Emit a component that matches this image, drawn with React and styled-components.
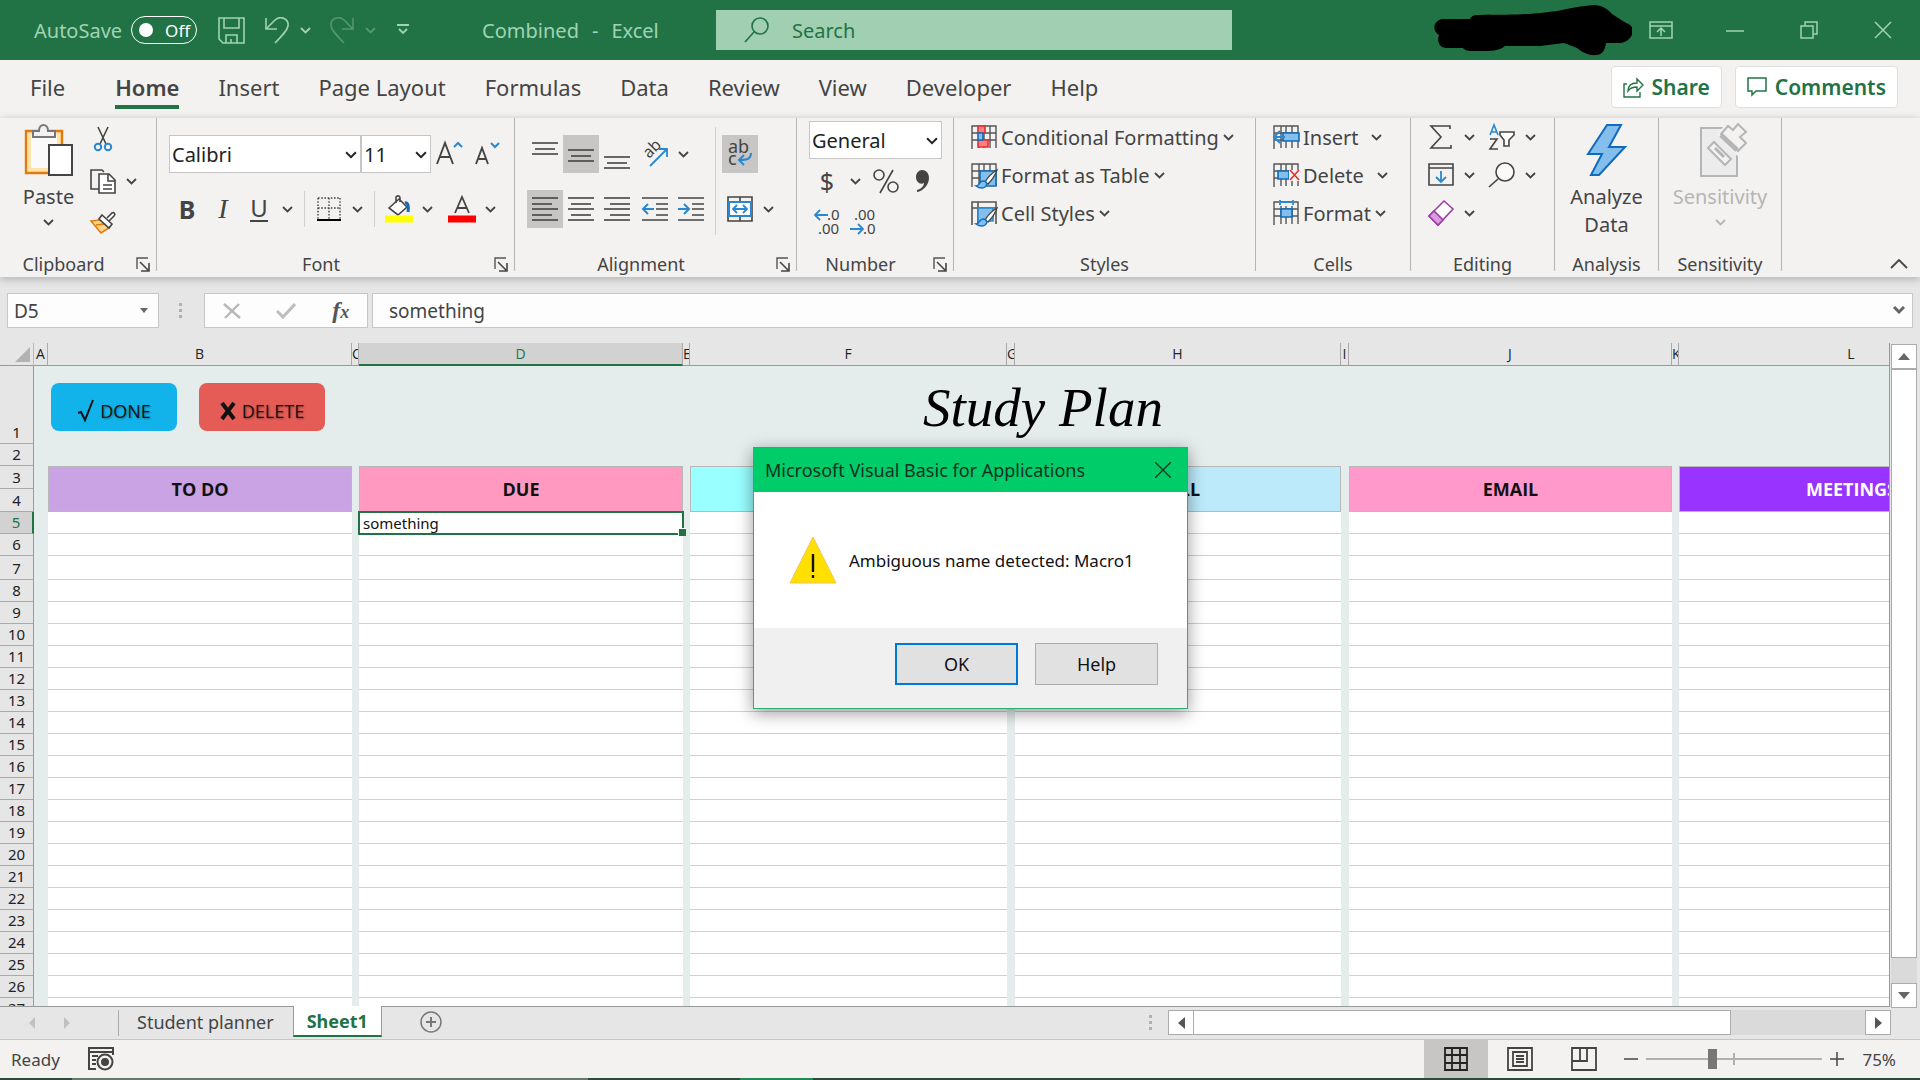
import { useState } from "react";
import styled, { createGlobalStyle } from "styled-components";

const columns = [
  { name: "A", width: 14 },
  { name: "B", width: 304, title: "TO DO", color: "#c9a3e4" },
  { name: "C", width: 7 },
  { name: "D", width: 324, title: "DUE", color: "#ff99c0" },
  { name: "E", width: 7 },
  { name: "F", width: 317, title: "TEST", color: "#99ffff" },
  { name: "G", width: 8 },
  { name: "H", width: 326, title: "CALL", color: "#bdeafa" },
  { name: "I", width: 8 },
  { name: "J", width: 323, title: "EMAIL", color: "#ff99cc" },
  { name: "K", width: 7 },
  { name: "L", width: 345, title: "MEETINGS", color: "#9933ff", text: "#fff" },
  { name: "M", width: 14 },
];

const rows = Array.from({ length: 23 }, (_, i) => i + 5);
const tabs = [
  "File",
  "Home",
  "Insert",
  "Page Layout",
  "Formulas",
  "Data",
  "Review",
  "View",
  "Developer",
  "Help",
];

function Chevron({ size = 11, color = "currentColor" }) {
  return (
    <svg width={size} height={size} viewBox="0 0 11 11" fill="none">
      <path d="M1 3l4.5 4.5L10 3" stroke={color} strokeWidth="1.8" />
    </svg>
  );
}

function Icon({ w = 26, h = 26, children }) {
  return (
    <svg
      width={w}
      height={h}
      viewBox={`0 0 ${w} ${h}`}
      fill="none"
      stroke="#444"
      strokeWidth="1.6"
      overflow="visible"
    >
      {children}
    </svg>
  );
}

function Split({ label, children }) {
  return (
    <Cluster>
      <ToolButton aria-label={label}>{children}</ToolButton>
      <ArrowButton aria-label={label + " options"}>
        <Chevron />
      </ArrowButton>
    </Cluster>
  );
}

function Lines({ rows: lines }) {
  return (
    <Icon>
      {lines.map(([x1, x2, y]) => (
        <path key={y} d={`M${x1} ${y}H${x2}`} />
      ))}
    </Icon>
  );
}

function Launcher({ label }) {
  return (
    <LauncherButton aria-label={label + " settings"}>
      <svg width="14" height="15" viewBox="0 0 14 15" fill="none">
        <path d="M1 12V1h11" stroke="#555" strokeWidth="1.4" />
        <path d="M4 5l8 8M13 6v8H5" stroke="#444" strokeWidth="1.6" />
      </svg>
    </LauncherButton>
  );
}

function Group({ name, width, launcher, children }) {
  return (
    <GroupWrapper $width={width}>
      <GroupBody>{children}</GroupBody>
      <GroupFooter>
        <GroupName>{name}</GroupName>
        {launcher && <Launcher label={name} />}
      </GroupFooter>
    </GroupWrapper>
  );
}

function Select({ label, value, width }) {
  return (
    <SelectWrapper $width={width}>
      <StyledSelect aria-label={label} defaultValue={value}>
        <option>{value}</option>
      </StyledSelect>
      <Chevron size={12} color="#222" />
    </SelectWrapper>
  );
}

function TableGrid() {
  return (
    <path
      d="M1 25V2h24v22M1 9h24M1 16h24M8 2v22M13 2v22M19 2v22"
      stroke="#555"
      strokeWidth="1.4"
    />
  );
}

function Brush() {
  return (
    <>
      <path
        d="M26 8c-5 3-9 7-12 12l3 2c4-4 7-8 9-14z"
        fill="#fff"
        stroke="#444"
        strokeWidth="1.3"
      />
      <path
        d="M5 24c4 0 3-5 7-5s5 4 2 6-6 1-9-1z"
        fill="#83beec"
        stroke="#0f6cbd"
        strokeWidth="1.4"
      />
    </>
  );
}

function TitleBar() {
  const [autoSave, setAutoSave] = useState(false);
  return (
    <TitleBarWrapper>
      <TitleLeft>
        <AutoSaveLabel htmlFor="autosave">AutoSave</AutoSaveLabel>
        <Toggle
          id="autosave"
          role="switch"
          aria-checked={autoSave}
          onClick={() => setAutoSave(!autoSave)}
        >
          <Knob />
          {autoSave ? "On" : "Off"}
        </Toggle>
        <QuickButton $spaced aria-label="Save">
          <svg width="27" height="27" viewBox="0 0 27 27" fill="none" stroke="currentColor" strokeWidth="1.6">
            <path d="M1 1h25v25H5l-4-4zM6 1v10h15V1M8 26v-8h11v8M13 26v-4" />
          </svg>
        </QuickButton>
        <QuickButton aria-label="Undo">
          <svg width="26" height="27" viewBox="0 0 26 27" fill="none" stroke="currentColor" strokeWidth="1.6">
            <path d="M2 1v11h11M2 12L11 3c6-5 14-1 13 6-1 5-6 10-13 17" />
          </svg>
        </QuickButton>
        <QuickArrow aria-label="Undo history">
          <Chevron />
        </QuickArrow>
        <QuickButton aria-label="Redo" disabled>
          <svg width="26" height="27" viewBox="0 0 26 27" fill="none" stroke="currentColor" strokeWidth="1.6">
            <path d="M24 1v11H13M24 12L15 3C9-2 1 2 2 9c1 5 6 10 13 17" />
          </svg>
        </QuickButton>
        <QuickArrow aria-label="Redo history" disabled>
          <Chevron />
        </QuickArrow>
        <QuickArrow aria-label="Customize quick access">
          <svg width="14" height="12" viewBox="0 0 14 12" fill="none" stroke="currentColor" strokeWidth="1.8">
            <path d="M1 1h12M3 5l4 4 4-4" />
          </svg>
        </QuickArrow>
        <DocumentName>
          <span>Combined</span>
          <span>-</span>
          <span>Excel</span>
        </DocumentName>
      </TitleLeft>
      <SearchBox>
        <svg width="26" height="26" viewBox="0 0 26 26" fill="none" stroke="#217346" strokeWidth="1.6">
          <circle cx="16" cy="9" r="8" />
          <path d="M10 15L1 25" />
        </svg>
        <SearchInput aria-label="Search" placeholder="Search" />
      </SearchBox>
      <TitleRight>
        <svg width="198" height="54" viewBox="0 0 198 54">
          <path
            d="M8 16h28c2-4 5-4 9-4 44 0 55-1 78-4 14-3 25-5 36-6 9 0 15 4 19 9l14 9c12 3 7 19-6 20h-14c-1 7-3 11-9 12-10 1-16-4-20-7l-13-5-24 3h-35c-6 5-15 5-23 5-9 0-16 1-19-3H13C4 45 3 37 5 32-2 28-1 18 8 16z"
            fill="#000"
          />
        </svg>
        <WindowButton aria-label="Ribbon display options">
          <svg width="24" height="18" viewBox="0 0 24 18" fill="none" stroke="currentColor" strokeWidth="1.5">
            <path d="M1 1h22v16H1zM1 5h22M12 15V8M8 11l4-4 4 4" />
          </svg>
        </WindowButton>
        <WindowButton aria-label="Minimize">
          <svg width="18" height="18" viewBox="0 0 18 18" stroke="currentColor" strokeWidth="1.5">
            <path d="M0 10h18" />
          </svg>
        </WindowButton>
        <WindowButton aria-label="Restore">
          <svg width="18" height="18" viewBox="0 0 18 18" fill="none" stroke="currentColor" strokeWidth="1.5">
            <path d="M1 5h12v12H1zM5 5V1h12v12h-4" />
          </svg>
        </WindowButton>
        <WindowButton aria-label="Close">
          <svg width="18" height="18" viewBox="0 0 18 18" stroke="currentColor" strokeWidth="1.5">
            <path d="M1 1l16 16M17 1L1 17" />
          </svg>
        </WindowButton>
      </TitleRight>
    </TitleBarWrapper>
  );
}

function Ribbon() {
  return (
    <RibbonWrapper>
      <Group name="Clipboard" width={157} launcher>
        <BigButton $width={73}>
          <Icon w={50} h={54}>
            <path d="M2 8h36v42H2z" fill="#fde3a7" stroke="#e07b10" strokeWidth="2.4" />
            <path d="M7 12h26v33H7z" fill="#fafafa" stroke="none" />
            <path d="M9 14V8h6c0-8 9-8 9 0h7v6z" fill="#f3f2f1" stroke="#777" strokeWidth="2" />
            <path d="M25 22h23v30H25z" fill="#fff" stroke="#444" strokeWidth="2" />
          </Icon>
          Paste
          <Chevron />
        </BigButton>
        <Stack $row={42}>
          <ToolButton aria-label="Cut">
            <Icon w={20}>
              <path d="M5 1l8 17M15 1L7 18" />
              <g stroke="#2b88d0" strokeWidth="2">
                <circle cx="5" cy="21" r="3.2" />
                <circle cx="15" cy="21" r="3.2" />
              </g>
            </Icon>
          </ToolButton>
          <Split label="Copy">
            <Icon>
              <path d="M9 21H1V2h11l2 2" />
              <path d="M9 6h10l6 6v13H9z" fill="#fff" />
              <path d="M18 6v7h7M13 17h9M13 21h9" />
            </Icon>
          </Split>
          <ToolButton aria-label="Format painter">
            <Icon h={24}>
              <path d="M1 10l9-1 9 8-8 5z" fill="#fcd58a" stroke="#e07b10" />
              <path d="M6 14l8-1" stroke="#e07b10" />
              <path d="M12 4l10 9-3 4-10-9zM17 7l5-5c2-1 4 1 2 3l-5 5" fill="#fff" />
            </Icon>
          </ToolButton>
        </Stack>
      </Group>
      <Group name="Font" width={358} launcher>
        <Rows>
          <Cluster>
            <Select label="Font" value="Calibri" width={192} />
            <Select label="Font size" value="11" width={70} />
            <ToolButton aria-label="Increase font size">
              <Icon h={28}>
                <path d="M1 24L9 3l8 21M4 17h10" strokeWidth="1.9" />
                <path d="M18 7l4-4 4 4" stroke="#2b88d0" strokeWidth="2" />
              </Icon>
            </ToolButton>
            <ToolButton aria-label="Decrease font size">
              <Icon h={28}>
                <path d="M4 24l6-16 6 16M6 19h8" strokeWidth="1.9" />
                <path d="M19 3l4 4 4-4" stroke="#2b88d0" strokeWidth="2" />
              </Icon>
            </ToolButton>
          </Cluster>
          <Row>
            <Cluster>
              <ToolButton $bold>B</ToolButton>
              <ToolButton $italic>I</ToolButton>
              <Split label="Underline">
                <Underlined>U</Underlined>
              </Split>
            </Cluster>
            <Separator />
            <Split label="Borders">
              <Icon>
                <path
                  d="M2 2h22M2 12h22M2 2v22M13 2v22M24 2v22"
                  strokeWidth="1.4"
                  strokeDasharray="1.6 1.6"
                />
                <path d="M1 24h24" stroke="#000" strokeWidth="2" />
              </Icon>
            </Split>
            <Separator />
            <Split label="Fill color">
              <Icon w={28} h={28}>
                <path d="M4 13L14 4l8 8-9 8zM11 8V2c2-2 4-1 4 1v4" fill="#fff" />
                <path d="M20 8c3-1 4 3 3 9" stroke="#0f6cbd" strokeWidth="3" />
                <path d="M0 24h28" stroke="#ff0" strokeWidth="7" />
              </Icon>
            </Split>
            <Split label="Font color">
              <Icon w={28} h={28}>
                <path d="M7 18l7-16 7 16M10 13h9" strokeWidth="1.8" />
                <path d="M0 24h28" stroke="#f00" strokeWidth="7" />
              </Icon>
            </Split>
          </Row>
        </Rows>
      </Group>
      <Group name="Alignment" width={282} launcher>
        <Rows>
          <Row $gap={2}>
            <Cluster>
              <ToolButton aria-label="Top align">
                <Lines rows={[[0, 26, 2], [3, 23, 8], [0, 26, 13]]} />
              </ToolButton>
              <ToolButton $active aria-label="Middle align">
                <Lines rows={[[0, 26, 9], [3, 23, 15], [0, 26, 20]]} />
              </ToolButton>
              <ToolButton aria-label="Bottom align">
                <Lines rows={[[0, 26, 16], [3, 23, 22], [0, 26, 27]]} />
              </ToolButton>
            </Cluster>
            <Split label="Orientation">
              <Icon>
                <IconText transform="translate(7 18) rotate(-45)" $size={16}>
                  ab
                </IconText>
                <path d="M8 25L25 8M17 8h8v8" stroke="#2b88d0" strokeWidth="1.8" />
              </Icon>
            </Split>
          </Row>
          <Row $gap={2}>
            <Cluster>
              <ToolButton $active aria-label="Align left">
                <Lines rows={[[0, 26, 2], [0, 20, 8], [0, 26, 13], [0, 20, 19], [0, 26, 24]]} />
              </ToolButton>
              <ToolButton aria-label="Center">
                <Lines rows={[[0, 26, 2], [3, 23, 8], [0, 26, 13], [3, 23, 19], [0, 26, 24]]} />
              </ToolButton>
              <ToolButton aria-label="Align right">
                <Lines rows={[[0, 26, 2], [6, 26, 8], [0, 26, 13], [6, 26, 19], [0, 26, 24]]} />
              </ToolButton>
            </Cluster>
            <Cluster>
              <ToolButton aria-label="Decrease indent">
                <Icon>
                  <path d="M0 2h26M14 8h12M14 13h12M14 19h12M0 24h26" />
                  <path d="M12 13H1M6 8l-5 5 5 5" stroke="#2b88d0" strokeWidth="2" />
                </Icon>
              </ToolButton>
              <ToolButton aria-label="Increase indent">
                <Icon>
                  <path d="M0 2h26M14 8h12M14 13h12M14 19h12M0 24h26" />
                  <path d="M0 13h11M6 8l5 5-5 5" stroke="#2b88d0" strokeWidth="2" />
                </Icon>
              </ToolButton>
            </Cluster>
          </Row>
        </Rows>
        <Separator $tall />
        <Rows>
          <ToolButton $active aria-label="Wrap text">
            <Icon h={28}>
              <IconText x="1" y="13" $size={18}>ab</IconText>
              <IconText x="1" y="25" $size={18}>c</IconText>
              <path d="M24 13c0 6-4 7-11 7M17 15l-5 5 5 5" stroke="#2b88d0" strokeWidth="2" />
            </Icon>
          </ToolButton>
          <Split label="Merge and center">
            <Icon>
              <path d="M1 1h24v24H1zM13 1v24" />
              <path d="M2 6h22v14H2z" fill="#fff" stroke="#2b88d0" strokeWidth="2" />
              <path d="M6 13h14M10 9l-4 4 4 4M16 9l4 4-4 4" stroke="#2b88d0" strokeWidth="1.8" />
            </Icon>
          </Split>
        </Rows>
      </Group>
      <Group name="Number" width={157} launcher>
        <Rows $tight>
          <Select label="Number format" value="General" width={133} />
          <Row $gap={2}>
            <Split label="Currency">
              <Glyph>$</Glyph>
            </Split>
            <Cluster>
              <ToolButton aria-label="Percent">
                <Icon>
                  <circle cx="6" cy="7" r="5" />
                  <circle cx="20" cy="19" r="5" />
                  <path d="M20 2L7 25" />
                </Icon>
              </ToolButton>
              <ToolButton aria-label="Comma style">
                <Icon w={16} h={24}>
                  <path
                    d="M8 1c4 0 7 3 7 8 0 7-6 13-12 14v-2c4-1 7-4 7-7-4 2-8-1-8-6 0-4 3-7 6-7z"
                    fill="#444"
                    stroke="none"
                  />
                </Icon>
              </ToolButton>
            </Cluster>
          </Row>
          <Cluster>
            <ToolButton aria-label="Increase decimal">
              <Icon h={28}>
                <IconText x="13" y="12" $size={15}>.0</IconText>
                <IconText x="4" y="26" $size={15}>.00</IconText>
                <path d="M14 7H1M6 2L1 7l5 5" stroke="#2b88d0" strokeWidth="1.8" />
              </Icon>
            </ToolButton>
            <ToolButton aria-label="Decrease decimal">
              <Icon h={28}>
                <IconText x="4" y="12" $size={15}>.00</IconText>
                <IconText x="13" y="26" $size={15}>.0</IconText>
                <path d="M0 21h13M8 16l5 5-5 5" stroke="#2b88d0" strokeWidth="1.8" />
              </Icon>
            </ToolButton>
          </Cluster>
        </Rows>
      </Group>
      <Group name="Styles" width={302}>
        <Stack $row={38} $inset>
          <TextButton>
            <Icon>
              <TableGrid />
              <path d="M7 2h7v7H7zM7 16h10v7H7z" fill="#ff8080" stroke="#e03030" />
              <path d="M7 9h5v7H7z" fill="#83beec" stroke="#0f6cbd" />
            </Icon>
            Conditional Formatting
            <Chevron />
          </TextButton>
          <TextButton>
            <Icon>
              <TableGrid />
              <path d="M9 9h16v15H9z" fill="#83beec" stroke="#0f6cbd" />
              <Brush />
            </Icon>
            Format as Table
            <Chevron />
          </TextButton>
          <TextButton>
            <Icon>
              <path d="M1 25V2h24v22M1 8h24M7 2v22" stroke="#555" />
              <path d="M7 8h15v13H7z" fill="#83beec" stroke="#2b88d0" />
              <Brush />
            </Icon>
            Cell Styles
            <Chevron />
          </TextButton>
        </Stack>
      </Group>
      <Group name="Cells" width={155}>
        <Stack $row={38} $inset>
          <TextButton $wide>
            <Icon>
              <TableGrid />
              <path d="M10 9h16v8H10z" fill="#83beec" stroke="#0f6cbd" />
              <path d="M12 13H1M7 7l-6 6 6 6" stroke="#2b88d0" strokeWidth="2" />
            </Icon>
            Insert
            <Chevron />
          </TextButton>
          <TextButton $wide>
            <Icon>
              <TableGrid />
              <path d="M5 9h11v8H5z" fill="#83beec" stroke="#0f6cbd" />
              <path d="M16 8h10v11H16z" fill="#f3f2f1" stroke="none" />
              <path d="M17 8l9 10M26 8l-9 10" stroke="#e03030" />
            </Icon>
            Delete
            <Chevron />
          </TextButton>
          <TextButton>
            <Icon>
              <TableGrid />
              <path d="M6 0h15v6H6z" fill="#f3f2f1" stroke="none" />
              <path d="M8 9h11v8H8z" fill="#83beec" stroke="#0f6cbd" />
              <path d="M7 2h13M7 0v5M20 0v5" stroke="#2b88d0" strokeWidth="1.8" />
            </Icon>
            Format
            <Chevron />
          </TextButton>
        </Stack>
      </Group>
      <Group name="Editing" width={144}>
        <Stack $row={38}>
          <Split label="AutoSum">
            <Icon>
              <path d="M22 5V2H3l10 11L3 24h20v-3" />
            </Icon>
          </Split>
          <Split label="Fill">
            <Icon h={24}>
              <path d="M1 1h24v21H1zM1 5h24" />
              <path d="M13 8v11M8 14l5 5 5-5" stroke="#2b88d0" strokeWidth="1.8" />
            </Icon>
          </Split>
          <Split label="Clear">
            <Icon>
              <path d="M1 16L16 1l9 8-15 16z" fill="#fff" stroke="#9b3fa5" />
              <path d="M1 16l5-5 9 9-5 5z" fill="#dc9be0" stroke="#9b3fa5" />
            </Icon>
          </Split>
        </Stack>
        <Stack $row={38}>
          <Split label="Sort and filter">
            <Icon>
              <path d="M1 11L5 1l4 10M2 8h6" stroke="#2b88d0" />
              <path d="M1 15h7L1 25h8" />
              <path d="M11 8h14v3l-5 5v6h-5v-6l-4-5z" fill="#fff" />
            </Icon>
          </Split>
          <Split label="Find">
            <Icon>
              <circle cx="16" cy="10" r="9" fill="#fafafa" />
              <path d="M9 17L0 25" />
            </Icon>
          </Split>
        </Stack>
      </Group>
      <Group name="Analysis" width={104}>
        <BigButton>
          <Icon w={40} h={54}>
            <path
              d="M20 2h14L22 24h16L12 52H4l11-21H1z"
              fill="#83beec"
              stroke="#0f6cbd"
              strokeWidth="2"
            />
          </Icon>
          <span>
            Analyze
            <br />
            Data
          </span>
        </BigButton>
      </Group>
      <Group name="Sensitivity" width={123}>
        <BigButton disabled>
          <Icon w={50} h={54}>
            <g stroke="#b5b5b5" strokeWidth="2" transform="translate(4 0)">
              <path d="M2 5h36v48H2z" fill="#ececec" />
              <path d="M15 19l17 17-6 6L9 25z" fill="#f3f2f1" />
              <path d="M16 25l9 9" strokeWidth="3" />
              <path d="M22 11l7-8 5 4 5-6 8 8-6 5 6 6-8 9z" fill="#f3f2f1" stroke="#f3f2f1" strokeWidth="6" />
              <path d="M22 11l7-8 5 4 5-6 8 8-6 5 6 6-8 8z" fill="#f3f2f1" />
              <path d="M22 12l16 15" strokeWidth="5" />
            </g>
          </Icon>
          Sensitivity
          <Chevron />
        </BigButton>
      </Group>
      <CollapseButton aria-label="Collapse ribbon">
        <svg width="18" height="10" viewBox="0 0 18 10" fill="none" stroke="#444" strokeWidth="1.8">
          <path d="M1 9l8-8 8 8" />
        </svg>
      </CollapseButton>
    </RibbonWrapper>
  );
}

function FormulaBar() {
  return (
    <FormulaWrapper>
      <NameBox>
        <NameInput aria-label="Name box" defaultValue="D5" />
        <svg width="8" height="5" viewBox="0 0 8 5">
          <path d="M0 0h8L4 5z" fill="#666" />
        </svg>
      </NameBox>
      <Dots $gap={22} />
      <FormulaTools>
        <FormulaButton aria-label="Cancel">
          <svg width="18" height="16" viewBox="0 0 18 16" stroke="#b8b8b8" strokeWidth="2.4">
            <path d="M1 1l16 14M16 1L2 15" />
          </svg>
        </FormulaButton>
        <FormulaButton aria-label="Enter">
          <svg width="20" height="16" viewBox="0 0 20 16" fill="none" stroke="#bdbdbd" strokeWidth="3">
            <path d="M1 8l6 6L19 1" />
          </svg>
        </FormulaButton>
        <FormulaButton $serif aria-label="Insert function">
          f<small>x</small>
        </FormulaButton>
      </FormulaTools>
      <FormulaField>
        <FormulaInput aria-label="Formula" defaultValue="something" />
        <svg width="12" height="9" viewBox="0 0 12 9" fill="none" stroke="#666" strokeWidth="3">
          <path d="M1 1l5 5 5-5" />
        </svg>
      </FormulaField>
    </FormulaWrapper>
  );
}

function Sheet() {
  return (
    <SheetArea>
      <SheetView>
        <SheetTable>
          <colgroup>
            <Col $width={34} />
            {columns.map((column) => (
              <Col key={column.name} $width={column.width} />
            ))}
          </colgroup>
          <thead>
            <tr>
              <Corner>
                <svg width="15" height="15" viewBox="0 0 15 15">
                  <path d="M15 0v15H0z" fill="#b2b2b2" />
                </svg>
              </Corner>
              {columns.map((column) => (
                <ColumnHead key={column.name} $active={column.name === "D"}>
                  {column.name}
                </ColumnHead>
              ))}
            </tr>
          </thead>
          <tbody>
            <SheetRow $height={78}>
              <RowHead>1</RowHead>
              <Blank />
              <TitleCell colSpan={12}>
                Study Plan
                <ShapeButtons>
                  <ShapeButton $color="#12b3eb">
                    <svg width="17" height="24" viewBox="0 0 17 24" fill="none" stroke="#111" strokeWidth="2">
                      <path d="M1 14l3-1 4 8L16 1" />
                    </svg>
                    DONE
                  </ShapeButton>
                  <ShapeButton $color="#e55c56">
                    <svg width="16" height="18" viewBox="0 0 16 18" stroke="#111" strokeWidth="4">
                      <path d="M2 1l12 16M14 1L2 17" />
                    </svg>
                    DELETE
                  </ShapeButton>
                </ShapeButtons>
              </TitleCell>
            </SheetRow>
            <SheetRow $height={22}>
              <RowHead>2</RowHead>
              <Blank colSpan={13} />
            </SheetRow>
            <SheetRow $height={23}>
              <RowHead>3</RowHead>
              {columns.map((column) =>
                column.title ? (
                  <HeadingCell
                    key={column.name}
                    rowSpan={2}
                    $color={column.color}
                    $text={column.text}
                  >
                    {column.title}
                  </HeadingCell>
                ) : (
                  <Blank key={column.name} rowSpan={2} />
                )
              )}
            </SheetRow>
            <SheetRow $height={23}>
              <RowHead>4</RowHead>
            </SheetRow>
            {rows.map((row) => (
              <SheetRow key={row} $height={row === 7 ? 24 : 22}>
                <RowHead $active={row === 5}>{row}</RowHead>
                {columns.map((column) => {
                  if (!column.title) return <Blank key={column.name} />;
                  const selected = row === 5 && column.name === "D";
                  return (
                    <Cell key={column.name} $selected={selected}>
                      {selected && "something"}
                    </Cell>
                  );
                })}
              </SheetRow>
            ))}
          </tbody>
        </SheetTable>
      </SheetView>
      <VerticalScroll>
        <ScrollButton aria-label="Scroll up">
          <svg width="12" height="7" viewBox="0 0 12 7">
            <path d="M6 0l6 7H0z" fill="#666" />
          </svg>
        </ScrollButton>
        <ScrollThumb $vertical />
        <ScrollButton aria-label="Scroll down">
          <svg width="12" height="7" viewBox="0 0 12 7">
            <path d="M6 7l6-7H0z" fill="#666" />
          </svg>
        </ScrollButton>
      </VerticalScroll>
    </SheetArea>
  );
}

function SheetTabs() {
  return (
    <SheetTabsWrapper>
      <TabArrows>
        <svg width="6" height="12" viewBox="0 0 6 12">
          <path d="M6 0v12L0 6z" fill="#c0c0c0" />
        </svg>
        <svg width="6" height="12" viewBox="0 0 6 12">
          <path d="M0 0v12l6-6z" fill="#c0c0c0" />
        </svg>
      </TabArrows>
      <SheetTab>Student planner</SheetTab>
      <SheetTab $active>Sheet1</SheetTab>
      <AddSheet aria-label="New sheet">
        <svg width="22" height="22" viewBox="0 0 22 22" fill="none" stroke="#777" strokeWidth="1.5">
          <circle cx="11" cy="11" r="10" />
          <path d="M6 11h10M11 6v10" strokeWidth="2" />
        </svg>
      </AddSheet>
      <HorizontalScroll>
        <Dots $gap={16} />
        <ScrollTrack>
          <ScrollButton aria-label="Scroll left">
            <svg width="7" height="12" viewBox="0 0 7 12">
              <path d="M7 0v12L0 6z" fill="#555" />
            </svg>
          </ScrollButton>
          <ScrollThumb />
          <ScrollButton aria-label="Scroll right">
            <svg width="7" height="12" viewBox="0 0 7 12">
              <path d="M0 0v12l7-6z" fill="#555" />
            </svg>
          </ScrollButton>
        </ScrollTrack>
      </HorizontalScroll>
    </SheetTabsWrapper>
  );
}

function StatusBar() {
  return (
    <StatusWrapper>
      <StatusText>Ready</StatusText>
      <button aria-label="Record macro">
        <svg width="26" height="26" viewBox="0 0 26 26" fill="none" stroke="#444" strokeWidth="2">
          <path d="M8 23H1V2h24v7M1 6h24M4 10h6M4 14h4M4 18h4" />
          <circle cx="17" cy="16" r="7.5" />
          <circle cx="17" cy="16" r="3" fill="#444" />
        </svg>
      </button>
      <StatusRight>
        <ViewButton $active aria-label="Normal view">
          <svg width="24" height="24" viewBox="0 0 24 24" fill="none" stroke="#222" strokeWidth="1.8">
            <path d="M1 1h22v22H1zM1 8h22M1 16h22M8 1v22M16 1v22" />
          </svg>
        </ViewButton>
        <ViewButton aria-label="Page layout view">
          <svg width="26" height="24" viewBox="0 0 26 24" fill="none" stroke="#444" strokeWidth="1.8">
            <path d="M1 1h24v22H1zM6 5h14v14H6zM9 9h8M9 12h8M9 15h8" />
          </svg>
        </ViewButton>
        <ViewButton aria-label="Page break view">
          <svg width="26" height="24" viewBox="0 0 26 24" fill="none" stroke="#444" strokeWidth="1.8">
            <path d="M1 1h24v22H1zM1 14h15V1M9 1v13" />
          </svg>
        </ViewButton>
        <ZoomButton aria-label="Zoom out">
          <svg width="14" height="14" viewBox="0 0 14 14" stroke="#444" strokeWidth="1.5">
            <path d="M0 7h14" />
          </svg>
        </ZoomButton>
        <ZoomSlider type="range" min="0" max="100" defaultValue="37" aria-label="Zoom" />
        <ZoomButton aria-label="Zoom in">
          <svg width="14" height="14" viewBox="0 0 14 14" stroke="#444" strokeWidth="1.5">
            <path d="M0 7h14M7 0v14" />
          </svg>
        </ZoomButton>
        <ZoomValue>75%</ZoomValue>
      </StatusRight>
    </StatusWrapper>
  );
}

function MessageDialog({ onClose }) {
  return (
    <Dialog role="alertdialog" aria-labelledby="dialog-title">
      <DialogHeader>
        <span id="dialog-title">Microsoft Visual Basic for Applications</span>
        <DialogClose aria-label="Close" onClick={onClose}>
          <svg width="16" height="16" viewBox="0 0 16 16" stroke="#10321f" strokeWidth="1.3">
            <path d="M0 0l16 16M16 0L0 16" />
          </svg>
        </DialogClose>
      </DialogHeader>
      <DialogBody>
        <svg width="48" height="48" viewBox="0 0 48 48">
          <path d="M24 1l23 46H1z" fill="#ffe000" stroke="#f3c54a" />
          <path d="M24 18v18M24 39v3" stroke="#111" strokeWidth="2.4" />
        </svg>
        Ambiguous name detected: Macro1
      </DialogBody>
      <DialogFooter>
        <DialogButton $primary onClick={onClose}>
          OK
        </DialogButton>
        <DialogButton>Help</DialogButton>
      </DialogFooter>
    </Dialog>
  );
}

function App() {
  const [activeTab, setActiveTab] = useState("Home");
  const [showDialog, setShowDialog] = useState(true);

  return (
    <Window>
      <GlobalStyle />
      <TitleBar />
      <TabBar>
        {tabs.map((tab) => (
          <Tab key={tab} $active={tab === activeTab} onClick={() => setActiveTab(tab)}>
            {tab}
          </Tab>
        ))}
        <TabActions>
          <ActionButton>
            <svg width="21" height="21" viewBox="0 0 21 21" fill="none" stroke="#217346" strokeWidth="1.4">
              <path d="M4 7H1v13h16v-5M5 14c0-5 3-8 9-8V2l6 6-6 6v-4c-4 0-7 1-9 4z" />
            </svg>
            Share
          </ActionButton>
          <ActionButton>
            <svg width="20" height="20" viewBox="0 0 20 20" fill="none" stroke="#217346" strokeWidth="1.5">
              <path d="M1 1h18v13H9l-4 4v-4H1z" />
            </svg>
            Comments
          </ActionButton>
        </TabActions>
      </TabBar>
      <Ribbon />
      <FormulaBar />
      <Sheet />
      <SheetTabs />
      <StatusBar />
      <Taskbar />
      {showDialog && <MessageDialog onClose={() => setShowDialog(false)} />}
    </Window>
  );
}

const GlobalStyle = createGlobalStyle`
  * {
    box-sizing: border-box;
  }
  body {
    margin: 0;
    overflow: hidden;
    font-family: "Noto Sans", "Open Sans", sans-serif;
    font-size: 20px;
    color: #444;
  }
  button, input, select {
    font: inherit;
    color: inherit;
    margin: 0;
    padding: 0;
    border: none;
    background: none;
  }
  svg {
    display: block;
    flex-shrink: 0;
  }
`;

const Window = styled.div`
  display: flex;
  flex-direction: column;
  height: 100vh;
  background-color: #e6e6e6;
`;

const TitleBarWrapper = styled.header`
  display: grid;
  grid-template-columns: 716fr 516fr 688fr;
  align-items: center;
  height: 60px;
  background-color: #217346;
  color: #a0d3b4;
`;

const TitleLeft = styled.div`
  display: flex;
  align-items: center;
  padding-left: 34px;
`;

const AutoSaveLabel = styled.label`
  margin-right: 9px;
`;

const Toggle = styled.button`
  display: flex;
  align-items: center;
  gap: 12px;
  width: 66px;
  height: 28px;
  margin-right: 20px;
  padding-left: 7px;
  border: 1px solid #fff;
  border-radius: 14px;
  color: #fff;
  font-size: 17px;
`;

const Knob = styled.span`
  width: 14px;
  height: 14px;
  border-radius: 50%;
  background-color: #fff;
`;

const QuickButton = styled.button`
  display: flex;
  justify-content: center;
  width: 28px;
  margin-right: ${({ $spaced }) => ($spaced ? 18 : 4)}px;
  &:disabled {
    color: #55956f;
  }
`;

const QuickArrow = styled.button`
  display: flex;
  justify-content: center;
  width: 20px;
  margin-right: 13px;
  &:disabled {
    color: #55956f;
  }
`;

const DocumentName = styled.div`
  display: flex;
  gap: 13px;
  margin-left: 56px;
`;

const SearchBox = styled.div`
  display: flex;
  align-items: center;
  gap: 22px;
  height: 40px;
  padding: 0 28px;
  background-color: #a0cfb2;
`;

const SearchInput = styled.input`
  flex: 1;
  min-width: 0;
  outline: none;
  &::placeholder {
    color: #217346;
    opacity: 1;
  }
`;

const TitleRight = styled.div`
  display: flex;
  justify-content: flex-end;
  align-items: center;
  & > svg {
    margin-right: -8px;
  }
`;

const WindowButton = styled.button`
  display: flex;
  justify-content: center;
  width: 74px;
`;

const TabBar = styled.nav`
  display: flex;
  align-items: center;
  height: 58px;
  padding: 0 22px 0 30px;
  background-color: #f3f2f1;
`;

const Tab = styled.button`
  height: 40px;
  margin-right: 39px;
  border-bottom: 4px solid ${({ $active }) => ($active ? "#217346" : "transparent")};
  font-size: 22px;
  font-weight: ${({ $active }) => ($active ? 600 : 400)};
  line-height: 34px;
  white-space: nowrap;
  &:first-child {
    margin-right: 50px;
  }
`;

const TabActions = styled.div`
  display: flex;
  gap: 13px;
  margin: 0 0 4px auto;
`;

const ActionButton = styled.button`
  display: flex;
  align-items: center;
  gap: 8px;
  height: 42px;
  padding: 0 11px;
  border: 1px solid #e1dfdd;
  border-radius: 4px;
  background-color: #fff;
  color: #217346;
  font-size: 21px;
  font-weight: 600;
`;

const RibbonWrapper = styled.section`
  display: flex;
  height: 159px;
  background-color: #f3f2f1;
  box-shadow: 0 2px 8px #b0b0b0;
`;

const GroupWrapper = styled.div`
  display: flex;
  flex-direction: column;
  width: ${({ $width }) => $width}px;
  height: 153px;
  border-right: 1px solid #b5b5b5;
`;

const GroupBody = styled.div`
  display: flex;
  flex: 1;
  padding-left: 12px;
`;

const GroupFooter = styled.div`
  display: flex;
  align-items: center;
  height: 14px;
`;

const GroupName = styled.span`
  flex: 1;
  font-size: 18px;
  line-height: 14px;
  text-align: center;
`;

const LauncherButton = styled.button`
  display: flex;
  margin: 0 6px 0 9px;
`;

const Stack = styled.div`
  display: grid;
  grid-auto-rows: ${({ $row }) => $row}px;
  align-content: start;
  align-items: center;
  justify-items: start;
  padding-left: ${({ $inset }) => ($inset ? 5 : 0)}px;
  margin-right: 4px;
`;

const Rows = styled.div`
  display: flex;
  flex-direction: column;
  align-items: flex-start;
  gap: ${({ $tight }) => ($tight ? 3 : 17)}px;
  padding-top: ${({ $tight }) => ($tight ? 3 : 17)}px;
`;

const Row = styled.div`
  display: flex;
  align-items: center;
  gap: ${({ $gap }) => $gap || 6}px;
`;

const Cluster = styled.div`
  display: flex;
  align-items: center;
`;

const Separator = styled.div`
  width: 1px;
  height: ${({ $tall }) => ($tall ? 108 : 36)}px;
  margin: ${({ $tall }) => ($tall ? "9px 6px 0" : "0")};
  background-color: #d0d0d0;
`;

const ToolButton = styled.button`
  display: flex;
  justify-content: center;
  align-items: center;
  width: 36px;
  height: 38px;
  font-size: 25px;
  background-color: ${({ $active }) => ($active ? "#c8c6c4" : "transparent")};
  font-weight: ${({ $bold }) => ($bold ? 700 : 400)};
  ${({ $italic }) =>
    $italic &&
    `
    font-family: "Liberation Serif", serif;
    font-style: italic;
    font-size: 28px;
  `};
  &:hover {
    background-color: #c8c6c4;
  }
`;

const ArrowButton = styled.button`
  display: flex;
  justify-content: center;
  align-items: center;
  width: 21px;
  height: 38px;
`;

const Underlined = styled.span`
  border-bottom: 2px solid #444;
  font-size: 24px;
  line-height: 24px;
`;

const Glyph = styled.span`
  font-size: 25px;
`;

const IconText = styled.text`
  font-size: ${({ $size }) => $size}px;
  fill: #444;
  stroke: none;
`;

const BigButton = styled.button`
  display: flex;
  flex-direction: column;
  align-items: center;
  width: ${({ $width }) => ($width ? $width + "px" : "100%")};
  margin-right: ${({ $width }) => ($width ? 0 : 12)}px;
  padding-top: 5px;
  line-height: 28px;
  gap: 6px;
  &:disabled {
    color: #b5b5b5;
  }
`;

const TextButton = styled.button`
  display: flex;
  align-items: center;
  gap: 4px;
  white-space: nowrap;
  svg:last-child {
    margin-left: ${({ $wide }) => ($wide ? 9 : 0)}px;
  }
`;

const CollapseButton = styled.button`
  align-self: flex-end;
  margin: 0 12px 8px auto;
`;

const SelectWrapper = styled.div`
  position: relative;
  width: ${({ $width }) => $width}px;
  svg {
    position: absolute;
    right: 4px;
    top: 14px;
    pointer-events: none;
  }
`;

const StyledSelect = styled.select`
  appearance: none;
  width: 100%;
  height: 38px;
  padding-left: 2px;
  border: 1px solid #c8c6c4;
  background-color: #fff;
  color: #222;
`;

const FormulaWrapper = styled.section`
  display: flex;
  align-items: center;
  padding: 16px 7px 15px;
  font-size: 19px;
`;

const NameBox = styled.div`
  display: flex;
  align-items: center;
  width: 152px;
  height: 35px;
  padding: 0 10px 0 6px;
  border: 1px solid #c6c6c6;
  background-color: #fdfdfd;
`;

const NameInput = styled.input`
  flex: 1;
  min-width: 0;
`;

const Dots = styled.div`
  width: 3px;
  height: 15px;
  margin: 0 ${({ $gap }) => $gap}px 0 20px;
  background: repeating-linear-gradient(#b0b0b0 0 3px, transparent 3px 6px);
`;

const FormulaTools = styled.div`
  display: flex;
  justify-content: space-around;
  align-items: center;
  width: 164px;
  height: 35px;
  margin-right: 4px;
  border: 1px solid #c6c6c6;
  background-color: #fdfdfd;
`;

const FormulaButton = styled.button`
  ${({ $serif }) =>
    $serif &&
    `
    color: #555;
    font: italic bold 24px/28px "Liberation Serif", serif;
    small {
      font-size: 18px;
    }
  `};
`;

const FormulaField = styled.div`
  display: flex;
  align-items: center;
  flex: 1;
  height: 35px;
  padding: 0 7px 0 16px;
  border: 1px solid #c6c6c6;
  background-color: #fdfdfd;
`;

const FormulaInput = styled.input`
  flex: 1;
`;

const SheetArea = styled.main`
  display: flex;
  flex: 1;
  min-height: 0;
`;

const SheetView = styled.div`
  flex: 1;
  min-width: 0;
  overflow: hidden;
  border-right: 1px solid #999;
  border-bottom: 1px solid #999;
`;

const SheetTable = styled.table`
  table-layout: fixed;
  width: 2038px;
  border-collapse: separate;
  border-spacing: 0;
  color: #111;
  font-size: 15px;
  line-height: 20px;
  th,
  td {
    padding: 0;
  }
`;

const Col = styled.col`
  width: ${({ $width }) => $width}px;
`;

const Corner = styled.th`
  height: 23px;
  border-bottom: 1px solid #999;
  border-right: 1px solid #bbb;
  background-color: #e6e6e6;
  svg {
    margin-left: 15px;
  }
`;

const ColumnHead = styled.th`
  overflow: hidden;
  height: 23px;
  border-right: 1px solid #aaa;
  border-bottom: ${({ $active }) => ($active ? "2px solid #217346" : "1px solid #999")};
  background-color: ${({ $active }) => ($active ? "#d2d2d2" : "#e6e6e6")};
  color: ${({ $active }) => ($active ? "#217346" : "#222")};
  font-family: "Open Sans", sans-serif;
  font-size: 14px;
  font-weight: 400;
`;

const SheetRow = styled.tr`
  height: ${({ $height }) => $height}px;
`;

const RowHead = styled.th`
  border-right: ${({ $active }) => ($active ? "2px solid #217346" : "1px solid #999")};
  border-bottom: 1px solid #aaa;
  background-color: ${({ $active }) => ($active ? "#d2d2d2" : "#e6e6e6")};
  color: ${({ $active }) => ($active ? "#217346" : "#222")};
  font-weight: 400;
  line-height: 21px;
  vertical-align: bottom;
`;

const Blank = styled.td`
  background-color: #e4edeb;
`;

const TitleCell = styled.td`
  position: relative;
  background-color: #e4edeb;
  color: #000;
  font-family: "Monotype Corsiva", "Liberation Serif", serif;
  font-size: 55px;
  font-style: italic;
  line-height: 72px;
  text-align: center;
  && {
    padding-top: 6px;
  }
`;

const ShapeButtons = styled.div`
  position: absolute;
  top: 17px;
  left: 3px;
  display: flex;
  gap: 22px;
`;

const ShapeButton = styled.button`
  display: flex;
  justify-content: center;
  align-items: center;
  gap: 6px;
  width: 126px;
  height: 48px;
  padding-top: 7px;
  border-radius: 8px;
  background-color: ${({ $color }) => $color};
  color: #111;
  font: 400 18px/24px "Open Sans", sans-serif;
  text-shadow: 1px 1px 2px rgba(0, 0, 0, 0.35);
`;

const HeadingCell = styled.td`
  border: 1px solid #b8b8b8;
  background-color: ${({ $color }) => $color};
  color: ${({ $text }) => $text || "#111"};
  font-family: "Open Sans", sans-serif;
  font-size: 18px;
  font-weight: 700;
  text-align: center;
`;

const Cell = styled.td`
  border-bottom: 1px solid #d0d0d0;
  background-color: #fff;
  ${({ $selected }) =>
    $selected &&
    `
    position: relative;
    outline: 2px solid #217346;
    outline-offset: -1px;
    && {
      padding-left: 4px;
    }
    &::after {
      content: "";
      position: absolute;
      right: -3px;
      bottom: -3px;
      width: 7px;
      height: 7px;
      border: 1px solid #fff;
      border-width: 1px 0 0 1px;
      background-color: #217346;
    }
  `};
`;

const VerticalScroll = styled.div`
  display: flex;
  flex-direction: column;
  width: 26px;
  margin: 1px 3px -1px 1px;
  background-color: #dadada;
`;

const ScrollButton = styled.button`
  display: flex;
  justify-content: center;
  align-items: center;
  flex-shrink: 0;
  width: 26px;
  height: 25px;
  border: 1px solid #ababab;
  background-color: #fff;
`;

const ScrollThumb = styled.div`
  border: 1px solid #ababab;
  background-color: #fff;
  ${({ $vertical }) => $vertical && "flex: 1; margin-bottom: 25px;"};
`;

const SheetTabsWrapper = styled.nav`
  display: flex;
  align-items: flex-start;
  height: 33px;
  border-bottom: 1px solid #c6c6c6;
  font-size: 18px;
`;

const TabArrows = styled.div`
  display: flex;
  align-items: center;
  gap: 29px;
  width: 119px;
  height: 26px;
  margin-top: 3px;
  padding-left: 29px;
  border-right: 1px solid #aaa;
`;

const SheetTab = styled.button`
  height: 30px;
  padding: 0 19px 0 18px;
  line-height: 28px;
  ${({ $active }) =>
    $active &&
    `
    padding: 0 13px;
    margin-top: -1px;
    height: 31px;
    border: 1px solid #999;
    border-top: none;
    border-bottom: 2px solid #217346;
    background-color: #fff;
    color: #217346;
    font-weight: 700;
  `};
`;

const AddSheet = styled.button`
  margin: 4px 0 0 38px;
`;

const HorizontalScroll = styled.div`
  display: flex;
  align-items: center;
  width: 762px;
  margin: 3px 29px 0 auto;
`;

const ScrollTrack = styled.div`
  display: flex;
  justify-content: space-between;
  flex: 1;
  background-color: #dadada;
  & > div {
    flex: 0 0 538px;
    margin: 0 auto 0 -1px;
  }
`;

const StatusWrapper = styled.footer`
  display: flex;
  align-items: center;
  height: 38px;
  padding-left: 11px;
  background-color: #f3f2f1;
  font-size: 17px;
`;

const StatusText = styled.span`
  width: 77px;
`;

const StatusRight = styled.div`
  display: flex;
  align-items: center;
  height: 100%;
  margin-left: auto;
  padding-right: 24px;
`;

const ViewButton = styled.button`
  display: flex;
  justify-content: center;
  align-items: center;
  width: 64px;
  height: 100%;
  background-color: ${({ $active }) => ($active ? "#c8c6c4" : "transparent")};
`;

const ZoomButton = styled.button`
  margin: 0 8px;
`;

const ZoomSlider = styled.input`
  appearance: none;
  width: 176px;
  height: 20px;
  background: linear-gradient(#b0b0b0, #b0b0b0) center / 2px 12px no-repeat,
    linear-gradient(#b0b0b0, #b0b0b0) center / 100% 2px no-repeat;
  &::-webkit-slider-thumb {
    appearance: none;
    width: 9px;
    height: 20px;
    background-color: #777;
  }
`;

const ZoomValue = styled.span`
  margin-left: 10px;
`;

const Taskbar = styled.div`
  height: 2px;
  background: linear-gradient(
    to right,
    #2e4c3e 72px,
    #667a6c 72px 588px,
    #2e4c3e 588px 740px,
    #1f8a55 740px 813px,
    #2e4c3e 813px
  );
`;

const Dialog = styled.div`
  position: absolute;
  top: 447px;
  left: 753px;
  width: 435px;
  border: 1px solid #2fae72;
  background-color: #f0f0f0;
  box-shadow: 0 4px 16px rgba(0, 0, 0, 0.4);
  color: #111;
`;

const DialogHeader = styled.div`
  display: flex;
  justify-content: space-between;
  align-items: center;
  height: 44px;
  padding: 0 16px 0 11px;
  background-color: #00cc6a;
  color: #10321f;
  font-size: 18px;
`;

const DialogClose = styled.button`
  display: flex;
`;

const DialogBody = styled.div`
  display: flex;
  align-items: center;
  gap: 12px;
  height: 136px;
  padding-left: 35px;
  background-color: #fff;
  font-size: 17px;
`;

const DialogFooter = styled.div`
  display: flex;
  justify-content: flex-end;
  gap: 17px;
  padding: 15px 29px 23px;
  font-size: 18px;
`;

const DialogButton = styled.button`
  width: 123px;
  height: 42px;
  border: ${({ $primary }) => ($primary ? "2px solid #0078d7" : "1px solid #adadad")};
  background-color: #e1e1e1;
`;

export default App;
